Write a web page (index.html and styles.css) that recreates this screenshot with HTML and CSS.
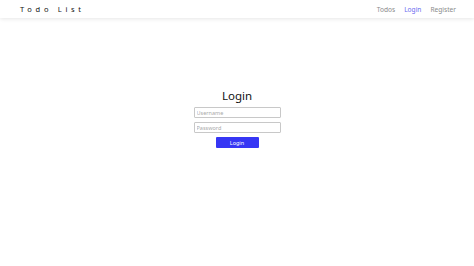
FILE: index.html
```html
<!DOCTYPE html>
<html>
<head>
<meta charset="utf-8">
<link rel="stylesheet" href="styles.css">
</head>
<body>
<header class="navbar">
  <div class="brand">Todo List</div>
  <nav class="links">
    <a class="link">Todos</a>
    <a class="link active">Login</a>
    <a class="link">Register</a>
  </nav>
</header>
<main class="main">
  <form class="login">
    <h1 class="title">Login</h1>
    <input class="field" type="text" placeholder="Username">
    <input class="field" type="password" placeholder="Password">
    <button class="btn" type="button">Login</button>
  </form>
</main>
</body>
</html>
```
FILE: styles.css
```css
* { box-sizing: border-box; }
html, body { margin: 0; padding: 0; background: #fff; }
body {
  font-family: "Noto Sans", "DejaVu Sans", sans-serif;
  color: #222;
  width: 474px;
  height: 266px;
  overflow: hidden;
}
.navbar {
  height: 18px;
  display: flex;
  align-items: center;
  justify-content: space-between;
  padding: 0 18px 0 20px;
  box-shadow: 0 1px 4px rgba(0,0,0,0.10);
}
.brand {
  font-size: 7.5px;
  letter-spacing: 3.7px;
  color: #111;
}
.links {
  display: flex;
  gap: 9px;
}
.link {
  font-size: 6.6px;
  color: #8a8a8a;
}
.link.active { color: #6a6aef; }
.main {
  display: flex;
  justify-content: center;
  padding-top: 71px;
}
.login {
  display: flex;
  flex-direction: column;
  align-items: center;
  width: 87px;
}
.title {
  margin: 0 0 4px;
  font-size: 11.5px;
  font-weight: 400;
  line-height: 14px;
  color: #111;
}
.field {
  width: 87px;
  height: 11px;
  margin: 0 0 4px;
  padding: 0 2px;
  border: 1px solid #c8c8c8;
  border-radius: 1px;
  font-family: inherit;
  font-size: 5.5px;
  outline: none;
}
.field::placeholder { color: #aaa; }
.btn {
  width: 43px;
  height: 11px;
  margin-top: 0;
  padding: 0;
  border: none;
  border-radius: 1px;
  background: #3636f4;
  color: #fff;
  font-family: inherit;
  font-size: 5.5px;
}
```
